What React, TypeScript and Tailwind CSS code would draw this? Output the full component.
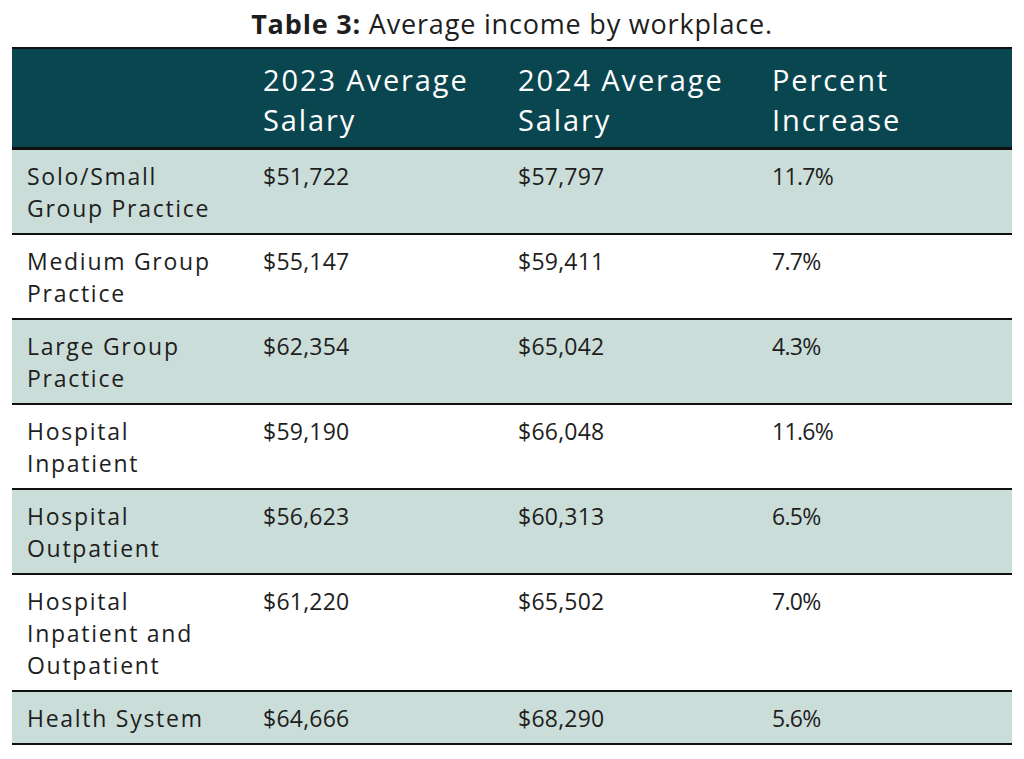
const rows = [
  { name: ['Solo/Small', 'Group Practice'], y23: '$51,722', y24: '$57,797', pct: '11.7%' },
  { name: ['Medium Group', 'Practice'], y23: '$55,147', y24: '$59,411', pct: '7.7%' },
  { name: ['Large Group', 'Practice'], y23: '$62,354', y24: '$65,042', pct: '4.3%' },
  { name: ['Hospital', 'Inpatient'], y23: '$59,190', y24: '$66,048', pct: '11.6%' },
  { name: ['Hospital', 'Outpatient'], y23: '$56,623', y24: '$60,313', pct: '6.5%' },
  { name: ['Hospital', 'Inpatient and', 'Outpatient'], y23: '$61,220', y24: '$65,502', pct: '7.0%' },
  { name: ['Health System'], y23: '$64,666', y24: '$68,290', pct: '5.6%' },
]

export default function App() {
  return (
    <div className="w-[1024px] h-[759px] bg-white font-['Open_Sans',sans-serif] text-[#1e1e1e]">
      <h1 className="pt-[6px] h-[47px] text-center text-[27px] leading-[36px] tracking-[0.03em]">
        <span className="font-bold">Table 3:</span> Average income by workplace.
      </h1>
      <div className="mx-[12px] border-t-2 border-[#111]">
        <div className="grid grid-cols-[236px_255px_254px_1fr] bg-[#0a4650] text-white text-[29px] leading-[40px] tracking-[0.065em] pt-[11px] pb-[7px] border-b-[3px] border-[#111]">
          <div />
          <div className="px-[15px]">2023 Average<br />Salary</div>
          <div className="px-[15px]">2024 Average<br />Salary</div>
          <div className="px-[15px]">Percent<br />Increase</div>
        </div>
        {rows.map((r, i) => (
          <div
            key={i}
            className={`grid grid-cols-[236px_255px_254px_1fr] text-[23px] leading-[32px] pt-[10px] pb-[9px] border-b-[2px] border-[#111] ${i % 2 === 0 ? 'bg-[#cbddd9]' : 'bg-white'}`}
          >
            <div className="px-[15px] tracking-[0.075em]">
              {r.name.map((n) => (
                <div key={n}>{n}</div>
              ))}
            </div>
            <div className="px-[15px] tracking-[0.01em]">{r.y23}</div>
            <div className="px-[15px] tracking-[0.01em]">{r.y24}</div>
            <div className="px-[15px] tracking-[-0.03em]">{r.pct}</div>
          </div>
        ))}
      </div>
    </div>
  )
}
